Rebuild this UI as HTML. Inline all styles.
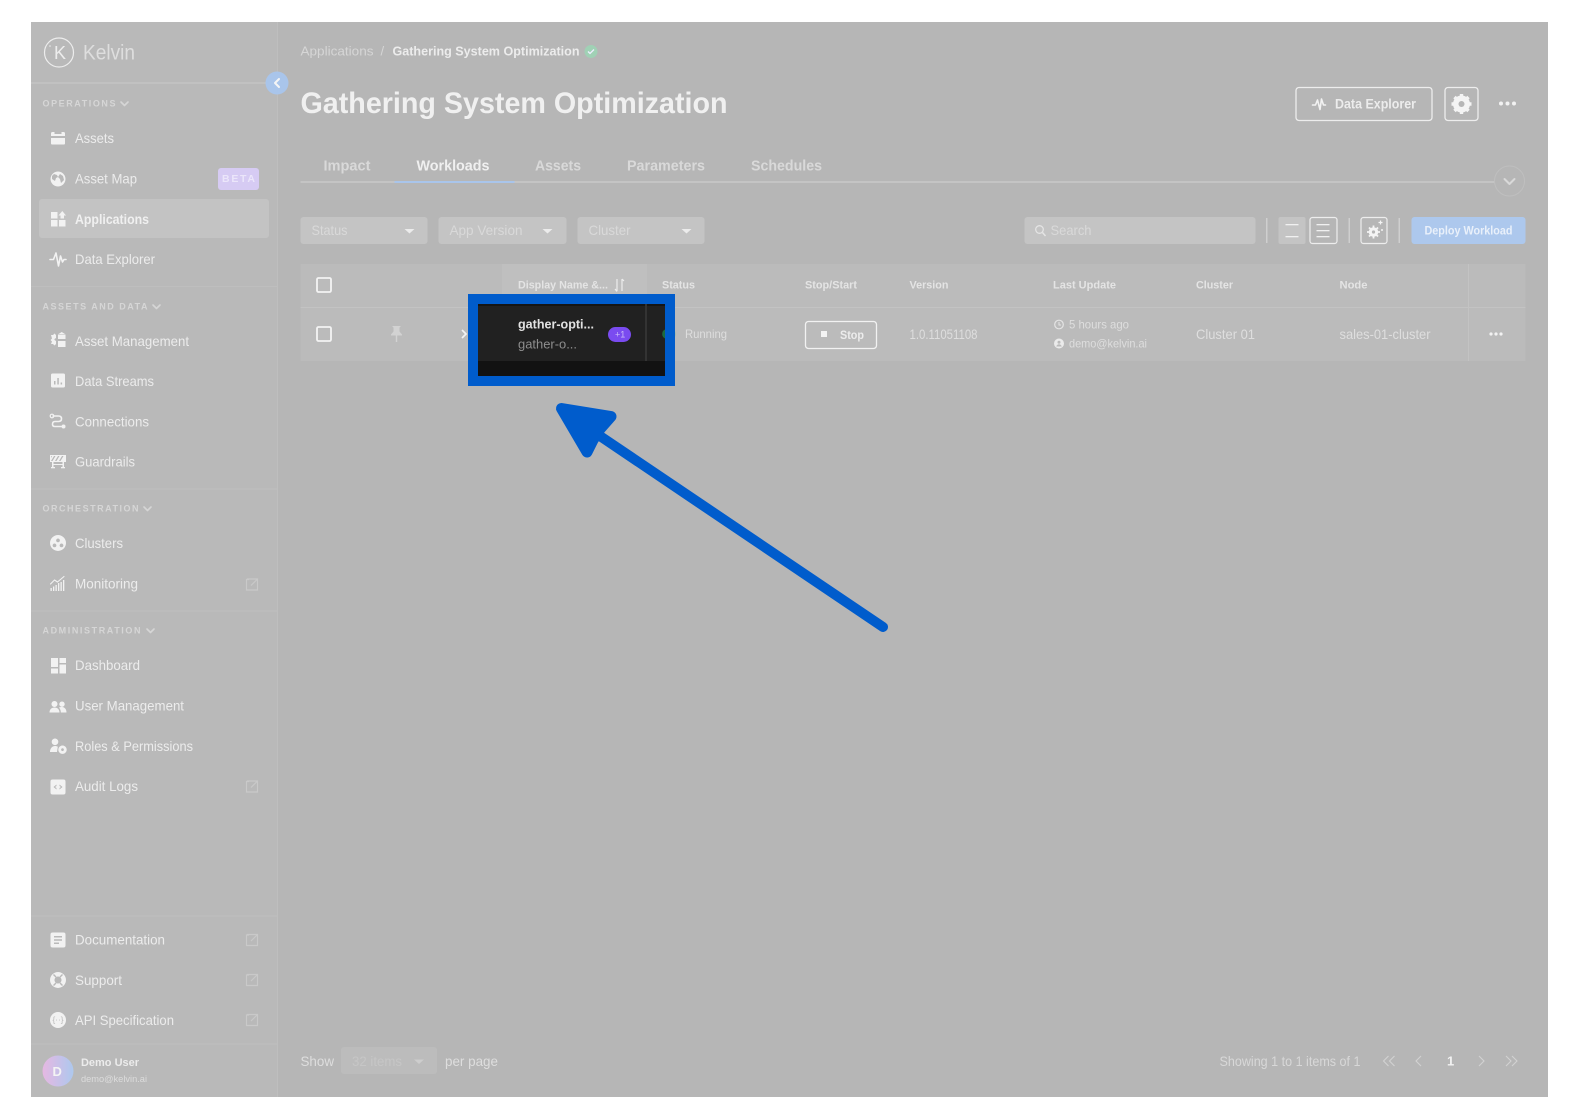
<!DOCTYPE html>
<html lang="en"><head><meta charset="utf-8"><title>Gathering System Optimization</title>
<style>
html,body{margin:0;padding:0;background:#fff;width:1580px;height:1120px;overflow:hidden}
svg{display:block}
text{font-family:"Liberation Sans",sans-serif;dominant-baseline:central;fill:#e6e6e6}
.n{font-size:14px;fill:#ececec}
.s{font-size:9px;font-weight:700;fill:#d6d6d6}
.h{font-size:11px;font-weight:700;fill:#e4e4e4}
.t{font-size:15px;font-weight:700;fill:#d9d9d9}
.f{font-size:14px;fill:#d9d9d9}
.c{font-size:14px;fill:#dedede}
.x{font-size:12px;fill:#dedede}
.ic{fill:#f2f2f2}
.ln{fill:none;stroke:#f2f2f2;stroke-width:1.6;stroke-linecap:round;stroke-linejoin:round}
.e{fill:none;stroke:#c9c9c9;stroke-width:1.2}
</style></head><body>
<svg width="1580" height="1120" viewBox="0 0 1580 1120" xmlns="http://www.w3.org/2000/svg">
<defs>
<filter id="b" x="0" y="0" width="100%" height="100%"><feGaussianBlur stdDeviation="0.35"/></filter>
<linearGradient id="av" x1="0" x2="1"><stop offset="0" stop-color="#e6b8e2"/><stop offset="1" stop-color="#adc8ee"/></linearGradient>
<g id="ext"><path class="e" d="M-3 -5H-5.500V5.500H5.500V2M-5 -5.500H5.500V5.500M-1 1L5 -5"/></g>
</defs>
<rect width="1580" height="1120" fill="#fff"/>
<g filter="url(#b)">
<rect x="31" y="22" width="1517" height="1075" fill="#b6b6b6"/>
<!-- sidebar -->
<rect x="31" y="22" width="246" height="1075" fill="#b9b9b9"/>
<rect x="277" y="22" width="1" height="1075" fill="#bebebe"/>
<rect x="31" y="82" width="246" height="2" fill="#c1c1c1"/>
<g fill="#bebebe"><rect x="31" y="286" width="246" height="1"/><rect x="31" y="488.500" width="246" height="1"/><rect x="31" y="610.500" width="246" height="1"/><rect x="31" y="915.500" width="246" height="1"/><rect x="31" y="1043.500" width="246" height="1"/></g>
<circle cx="59" cy="52.500" r="14.500" fill="none" stroke="#ededed" stroke-width="1.200"/>
<text x="54" y="53" font-size="18" style="fill:#ededed" textLength="12" lengthAdjust="spacingAndGlyphs">K</text>
<circle cx="50" cy="46" r="0.800" fill="#ededed"/>
<text x="83" y="53" font-size="21" style="fill:#dedede;font-weight:400" textLength="52" lengthAdjust="spacingAndGlyphs">Kelvin</text>
<circle cx="277" cy="83" r="11.500" fill="#a9c5eb"/>
<path d="M279 79L275 83L279 87" fill="none" stroke="#f5f5f5" stroke-width="2" stroke-linecap="round" stroke-linejoin="round"/>

<text class="s" x="42.500" y="103.300" textLength="73" lengthAdjust="spacing">OPERATIONS</text>
<path class="ln" style="stroke:#d6d6d6" d="M121 102L124.500 105.500L128 102"/>
<text class="s" x="42.500" y="306.300" textLength="105" lengthAdjust="spacing">ASSETS AND DATA</text>
<path class="ln" style="stroke:#d6d6d6" d="M153 305L156.500 308.500L160 305"/>
<text class="s" x="42.500" y="508.300" textLength="96" lengthAdjust="spacing">ORCHESTRATION</text>
<path class="ln" style="stroke:#d6d6d6" d="M144 507L147.500 510.500L151 507"/>
<text class="s" x="42.500" y="630.300" textLength="98" lengthAdjust="spacing">ADMINISTRATION</text>
<path class="ln" style="stroke:#d6d6d6" d="M147 629L150.500 632.500L154 629"/>

<rect x="39" y="199" width="230" height="39" rx="3" fill="#c3c3c3"/>
<rect x="218" y="168" width="41" height="22" rx="3" fill="#d6cbf3"/>
<text x="222" y="179" font-size="10.500" font-weight="700" style="fill:#ebe6fa" textLength="33" lengthAdjust="spacing">BETA</text>

<text class="n" x="75" y="138" textLength="39" lengthAdjust="spacingAndGlyphs">Assets</text>
<text class="n" x="75" y="178.500" textLength="62" lengthAdjust="spacingAndGlyphs">Asset Map</text>
<text class="n" x="75" y="219" style="font-weight:700;fill:#f0f0f0" textLength="74" lengthAdjust="spacingAndGlyphs">Applications</text>
<text class="n" x="75" y="259" textLength="80" lengthAdjust="spacingAndGlyphs">Data Explorer</text>
<text class="n" x="75" y="341" textLength="114" lengthAdjust="spacingAndGlyphs">Asset Management</text>
<text class="n" x="75" y="381" textLength="79" lengthAdjust="spacingAndGlyphs">Data Streams</text>
<text class="n" x="75" y="421.500" textLength="74" lengthAdjust="spacingAndGlyphs">Connections</text>
<text class="n" x="75" y="461.500" textLength="60" lengthAdjust="spacingAndGlyphs">Guardrails</text>
<text class="n" x="75" y="543" textLength="48" lengthAdjust="spacingAndGlyphs">Clusters</text>
<text class="n" x="75" y="583.500" textLength="63" lengthAdjust="spacingAndGlyphs">Monitoring</text>
<text class="n" x="75" y="665" textLength="65" lengthAdjust="spacingAndGlyphs">Dashboard</text>
<text class="n" x="75" y="705.500" textLength="109" lengthAdjust="spacingAndGlyphs">User Management</text>
<text class="n" x="75" y="746" textLength="118" lengthAdjust="spacingAndGlyphs">Roles &amp; Permissions</text>
<text class="n" x="75" y="786" textLength="63" lengthAdjust="spacingAndGlyphs">Audit Logs</text>
<text class="n" x="75" y="939.500" textLength="90" lengthAdjust="spacingAndGlyphs">Documentation</text>
<text class="n" x="75" y="980" textLength="47" lengthAdjust="spacingAndGlyphs">Support</text>
<text class="n" x="75" y="1020" textLength="99" lengthAdjust="spacingAndGlyphs">API Specification</text>

<!-- nav icons -->
<g class="ic">
<path d="M51 136V133.500Q51 132 52.500 132H54.500V134H61.500V132H63.500Q65 132 65 133.500V136ZM51 138H65V143.500Q65 144.500 64 144.500H52Q51 144.500 51 143.500Z" />
<path fill-rule="evenodd" d="M58 171.500a7.500 7.500 0 1 0 .01 0ZM54 174l3 1 1 2 -2 1 -1 3 -3 -2v-3ZM60 174l3 2 1 4 -3 3 -1 -4 -2 -2Z"/>
<path d="M51 212h6.500v6.500H51ZM51 220h6.500v6.500H51ZM59 220h6.500v6.500H59ZM62.300 211L66 215.500H64V218.500H60.500V215.500H58.500Z"/>
</g>
<path class="ln" d="M50 259.500H53.500L56 253L58.500 266L60.500 256L62.500 262L64 259.500H66"/>
<g class="ic">
<path d="M51 335h2l1.500 -1.500 1.500 1.500v3l-1.500 1v1l1.500 1v3l-1.500 1.500 -1.500 -1.500h-2l1 -2.500 -1.500 -1.500 1.500 -1.500ZM58 334.500h7.500v4.500H58ZM61.700 332L65 334H58.500ZM58 341h7.500v6H58Z"/>
<path fill-rule="evenodd" d="M52.500 373.500h11a1.500 1.500 0 0 1 1.500 1.500v11a1.500 1.500 0 0 1 -1.500 1.500h-11a1.500 1.500 0 0 1 -1.500 -1.500v-11a1.500 1.500 0 0 1 1.500 -1.500ZM54 381v3.500h1.500V381ZM57.300 378v6.500h1.500V378ZM60.600 382.500v2h1.500v-2Z"/>
</g>
<path class="ln" d="M53 416H58.500Q61.500 416 61.500 418.800Q61.500 421.500 58.500 421.500H55Q52.500 421.500 52.500 424.200Q52.500 426.500 55 426.500H61"/>
<circle cx="52" cy="416" r="1.800" fill="none" stroke="#f2f2f2" stroke-width="1.200"/><circle cx="63.500" cy="426.500" r="2" fill="#f2f2f2"/>
<g class="ic">
<path fill-rule="evenodd" d="M50 455h16v7H50ZM52 456l-1 2v-2ZM54 456l-3 5h1.500l3 -5ZM58 456l-3 5h1.500l3 -5ZM62 456l-3 5h1.500l3 -5Z"/>
<rect x="52" y="462" width="1.500" height="6"/><rect x="62.500" y="462" width="1.500" height="6"/><rect x="51" y="467" width="4" height="1.300"/><rect x="61" y="467" width="4" height="1.300"/><rect x="52" y="464" width="12" height="1"/>
<path fill-rule="evenodd" d="M58 535a8 8 0 1 0 .01 0ZM58 538.500a1.900 1.900 0 1 0 .01 0ZM54.500 543.500a1.900 1.900 0 1 0 .01 0ZM61.500 543.500a1.900 1.900 0 1 0 .01 0Z"/>
<path d="M50.500 588h1.300v3h-1.300ZM53 586.500h1.300v4.500H53ZM55.500 585h1.300v6h-1.300ZM58 583h1.300v8H58ZM60.500 582h1.300v9h-1.300ZM63 580h1.300v11H63Z"/>
</g>
<path class="ln" style="stroke-width:1.100" d="M50.500 584L54.500 580L57.500 582L64 576.500"/>
<g class="ic">
<path d="M51 658h7v9h-7ZM59.500 658h6.500v5h-6.500ZM59.500 664.500h6.500v9h-6.500ZM51 668.500h7v5h-7Z"/>
<path d="M54.500 701a3 3 0 1 1 -.01 0ZM62 701.500a2.700 2.700 0 1 1 -.01 0ZM49.500 712.500c0 -3 2 -5 5 -5s5 2 5 5ZM60.800 712.500c0 -2 -.5 -3.500 -1.800 -5 .8 -.4 2 -.5 3 -.5 2.500 0 4.500 2 4.500 5.500Z"/>
<path d="M55 738.500a3.300 3.300 0 1 1 -.01 0ZM50 752c0 -3.500 2 -6 5 -6 1.200 0 2 .3 2.800 .7l-.8 5.300Z"/>
<path fill-rule="evenodd" d="M62.500 745.500a4.200 4.200 0 1 0 .01 0ZM62.500 748.300a1.400 1.400 0 1 0 .01 0Z"/>
<path fill-rule="evenodd" d="M52.500 779.500h11a2 2 0 0 1 2 2v11a2 2 0 0 1 -2 2h-11a2 2 0 0 1 -2 -2v-11a2 2 0 0 1 2 -2ZM56.500 784.500L53.500 787L56.500 789.500V788L55 787L56.500 786ZM59.500 784.500V786L61 787L59.500 788V789.500L62.500 787Z"/>
<path fill-rule="evenodd" d="M52.500 932.500h11a2 2 0 0 1 2 2v11a2 2 0 0 1 -2 2h-11a2 2 0 0 1 -2 -2v-11a2 2 0 0 1 2 -2ZM54 936v1.500h8V936ZM54 939.300v1.500h8v-1.500ZM54 942.500v1.500h5v-1.500Z"/>
<path fill-rule="evenodd" d="M58 972a8 8 0 1 0 .01 0ZM58 976.500a3.500 3.500 0 1 0 .01 0ZM53 975l2.500 2.500 1 -1 -2.500 -2.500ZM63 975l-2.500 2.500 -1 -1 2.500 -2.500ZM53 985l2.500 -2.500 1 1 -2.500 2.500ZM63 985l-2.500 -2.500 -1 1 2.500 2.500Z"/>
<circle cx="58" cy="1020" r="8"/>
</g>
<text x="52.500" y="1020" font-size="8" style="fill:#b9b9b9" textLength="11" lengthAdjust="spacingAndGlyphs">{··}</text>
<use href="#ext" x="252" y="584.500"/><use href="#ext" x="252" y="786.500"/><use href="#ext" x="252" y="940"/><use href="#ext" x="252" y="980"/><use href="#ext" x="252" y="1020"/>

<circle cx="58" cy="1071" r="15.500" fill="url(#av)"/>
<text x="52.500" y="1071.500" font-size="13" font-weight="700" style="fill:#f4f4f4">D</text>
<text x="81" y="1063" font-size="11" font-weight="700" style="fill:#ececec" textLength="58" lengthAdjust="spacingAndGlyphs">Demo User</text>
<text x="81" y="1079.500" font-size="9.500" style="fill:#dcdcdc" textLength="66" lengthAdjust="spacingAndGlyphs">demo@kelvin.ai</text>

<!-- header -->
<text x="300.500" y="51" font-size="13" style="fill:#d6d6d6" textLength="73" lengthAdjust="spacingAndGlyphs">Applications</text>
<text x="380.500" y="51" font-size="13" style="fill:#d6d6d6">/</text>
<text x="392.500" y="51" font-size="13" font-weight="700" style="fill:#ececec" textLength="187" lengthAdjust="spacingAndGlyphs">Gathering System Optimization</text>
<circle cx="591" cy="51.500" r="6.500" fill="#a0d1b5"/>
<path d="M588 51.500L590 53.500L594 49.500" fill="none" stroke="#eef" stroke-width="1.300"/>
<text x="300.500" y="103.500" font-size="30" font-weight="700" style="fill:#f0f0f0" textLength="427" lengthAdjust="spacingAndGlyphs">Gathering System Optimization</text>

<g transform="translate(-2.500 0)">
<rect x="1298.500" y="87.500" width="136" height="33" rx="3" fill="none" stroke="#ededed" stroke-width="1.300"/>
<path class="ln" d="M1315 105H1318L1320 100L1322.500 109.500L1324 99L1326 105H1328"/>
<text x="1337.500" y="103.500" font-size="14" font-weight="700" style="fill:#ececec" textLength="81" lengthAdjust="spacingAndGlyphs">Data Explorer</text>
<rect x="1447.500" y="87.500" width="33" height="33" rx="3" fill="none" stroke="#ededed" stroke-width="1.300"/>
<circle cx="1464" cy="104" r="6.500" fill="none" stroke="#f4f4f4" stroke-width="4"/><path d="M1464 94V114M1454 104H1474M1457 97L1471 111M1471 97L1457 111" stroke="#f4f4f4" stroke-width="3.400"/>
<circle cx="1464" cy="104" r="3" fill="#b6b6b6"/>
<g fill="#f2f2f2"><circle cx="1503.500" cy="103.500" r="2"/><circle cx="1510" cy="103.500" r="2"/><circle cx="1516.500" cy="103.500" r="2"/></g>
</g>

<text class="t" x="323.500" y="166" textLength="47" lengthAdjust="spacingAndGlyphs">Impact</text>
<text class="t" x="416.500" y="166" style="fill:#f0f0f0" textLength="73" lengthAdjust="spacingAndGlyphs">Workloads</text>
<text class="t" x="535" y="166" textLength="46" lengthAdjust="spacingAndGlyphs">Assets</text>
<text class="t" x="627" y="166" textLength="78" lengthAdjust="spacingAndGlyphs">Parameters</text>
<text class="t" x="751" y="166" textLength="71" lengthAdjust="spacingAndGlyphs">Schedules</text>
<rect x="300.500" y="181.500" width="1195" height="1" fill="#d2d2d2"/>
<rect x="394.500" y="181" width="120" height="2" fill="#a9c5eb"/>
<circle cx="1509.500" cy="181" r="15" fill="#b6b6b6" stroke="#bfbfbf" stroke-width="1"/>
<path d="M1504.500 179L1509.500 184L1514.500 179" fill="none" stroke="#d9d9d9" stroke-width="2" stroke-linecap="round" stroke-linejoin="round"/>

<!-- filters -->
<g fill="#c4c4c4"><rect x="300.500" y="217" width="127" height="27" rx="3"/><rect x="438.500" y="217" width="128" height="27" rx="3"/><rect x="577.500" y="217" width="127" height="27" rx="3"/><rect x="1024.500" y="217" width="231" height="27" rx="3"/><rect x="1278.500" y="217" width="27" height="27" rx="2"/></g>
<text class="f" x="311.500" y="230" textLength="36" lengthAdjust="spacingAndGlyphs">Status</text>
<text class="f" x="449.500" y="230" textLength="73" lengthAdjust="spacingAndGlyphs">App Version</text>
<text class="f" x="588.500" y="230" textLength="42" lengthAdjust="spacingAndGlyphs">Cluster</text>
<g fill="#ececec"><path d="M404.500 229H414.500L409.500 233.500Z"/><path d="M542.500 229H552.500L547.500 233.500Z"/><path d="M681.500 229H691.500L686.500 233.500Z"/></g>
<g transform="translate(-2.500 0)">
<circle cx="1042" cy="229.500" r="3.800" fill="none" stroke="#e4e4e4" stroke-width="1.300"/><path d="M1045 232.500L1048 236" stroke="#e4e4e4" stroke-width="1.500"/>
<text class="f" x="1053" y="230" textLength="41" lengthAdjust="spacingAndGlyphs">Search</text>
<g fill="#cfcfcf"><rect x="1268.500" y="218" width="1.500" height="25"/><rect x="1351" y="218" width="1.500" height="25"/><rect x="1401" y="218" width="1.500" height="25"/></g>
<g fill="#f0f0f0"><rect x="1288" y="224" width="13" height="1.300"/><rect x="1288" y="236" width="13" height="1.300"/><rect x="1319" y="224" width="13" height="1.300"/><rect x="1319" y="230" width="13" height="1.300"/><rect x="1319" y="236" width="13" height="1.300"/></g>
<rect x="1312.500" y="217.500" width="27" height="26" rx="2.500" fill="none" stroke="#ededed" stroke-width="1.200"/>
<rect x="1363.500" y="217.500" width="26" height="26" rx="2.500" fill="none" stroke="#ededed" stroke-width="1.200"/>
<circle cx="1376" cy="232" r="3.500" fill="none" stroke="#f4f4f4" stroke-width="2.400"/>
<path d="M1376 225.500V238.500M1369.500 232H1382.500M1371.500 227.500L1380.500 236.500M1380.500 227.500L1371.500 236.500" stroke="#f4f4f4" stroke-width="1.800"/>
<circle cx="1376" cy="232" r="1.600" fill="#b6b6b6"/>
<path d="M1381 222.500H1385M1383 220.500V224.500" stroke="#f4f4f4" stroke-width="1.200"/><circle cx="1384.500" cy="230" r="1" fill="#f4f4f4"/>
<rect x="1414" y="217" width="114" height="27" rx="3" fill="#adc8ed"/>
<text x="1427" y="230.500" font-size="12" font-weight="700" style="fill:#e9f0fa" textLength="88" lengthAdjust="spacingAndGlyphs">Deploy Workload</text>
</g>

<!-- table -->
<rect x="300.500" y="264" width="1225" height="97" fill="#bbbbbb"/>
<rect x="502" y="264" width="145" height="97" fill="#bfbfbf"/>
<rect x="300.500" y="307" width="1225" height="1" fill="#c3c3c3"/>
<rect x="1470.500" y="264" width="1" height="97" fill="#c3c3c3" transform="translate(-2.500 0)"/>
<rect x="317" y="278" width="14" height="14" rx="1.500" fill="none" stroke="#f4f4f4" stroke-width="1.800"/>
<rect x="317" y="327" width="14" height="14" rx="1.500" fill="none" stroke="#f4f4f4" stroke-width="1.800"/>
<path d="M392 326H401L399.500 327.500V331.500L402 334.500V335.500H397.200V342H395.800V335.500H391V334.500L393.500 331.500V327.500Z" fill="#d2d2d2"/>
<path d="M462 330L466 334L462 338" fill="none" stroke="#f4f4f4" stroke-width="1.700"/>
<text class="h" x="518" y="285.500" textLength="90" lengthAdjust="spacingAndGlyphs">Display Name &amp;...</text>
<path d="M617 279V291M615 289L617 291.500M622 291V279M622 279L624 281" fill="none" stroke="#ededed" stroke-width="1.200"/>
<text class="h" x="662" y="285.500" textLength="33" lengthAdjust="spacingAndGlyphs">Status</text>
<text class="h" x="805" y="285.500" textLength="52" lengthAdjust="spacingAndGlyphs">Stop/Start</text>
<text class="h" x="909.500" y="285.500" textLength="39" lengthAdjust="spacingAndGlyphs">Version</text>
<text class="h" x="1053" y="285.500" textLength="63" lengthAdjust="spacingAndGlyphs">Last Update</text>
<text class="h" x="1196" y="285.500" textLength="37" lengthAdjust="spacingAndGlyphs">Cluster</text>
<text class="h" x="1339.500" y="285.500" textLength="28" lengthAdjust="spacingAndGlyphs">Node</text>
<text class="x" x="685" y="334" textLength="42" lengthAdjust="spacingAndGlyphs">Running</text>
<rect x="805.500" y="321.500" width="71" height="27" rx="3" fill="none" stroke="#f2f2f2" stroke-width="1.300"/>
<rect x="821" y="331" width="6" height="6" fill="#f4f4f4"/>
<text x="840" y="335" font-size="12" font-weight="700" style="fill:#ececec" textLength="24" lengthAdjust="spacingAndGlyphs">Stop</text>
<text class="c" x="909.500" y="334" textLength="68" lengthAdjust="spacingAndGlyphs">1.0.11051108</text>
<circle cx="1059" cy="324.500" r="4.300" fill="none" stroke="#e4e4e4" stroke-width="1.200"/><path d="M1059 322V325H1061" fill="none" stroke="#e4e4e4" stroke-width="1"/>
<text class="x" x="1069" y="324.500" textLength="60" lengthAdjust="spacingAndGlyphs">5 hours ago</text>
<circle cx="1059" cy="343.500" r="5" fill="#ebebeb"/><circle cx="1059" cy="342.200" r="1.500" fill="#bbb"/><path d="M1056.300 346.500c.5-1.600 1.500-2.200 2.700-2.200s2.200.6 2.700 2.200z" fill="#bbb"/>
<text class="x" x="1069" y="343.500" textLength="78" lengthAdjust="spacingAndGlyphs">demo@kelvin.ai</text>
<text class="c" x="1196" y="334" textLength="59" lengthAdjust="spacingAndGlyphs">Cluster 01</text>
<text class="c" x="1339.500" y="334" textLength="91" lengthAdjust="spacingAndGlyphs">sales-01-cluster</text>
<g fill="#f2f2f2"><circle cx="1491" cy="334" r="1.600"/><circle cx="1496" cy="334" r="1.600"/><circle cx="1501" cy="334" r="1.600"/></g>

<!-- footer -->
<text x="300.500" y="1061" font-size="14" style="fill:#dedede" textLength="33.500" lengthAdjust="spacingAndGlyphs">Show</text>
<rect x="341" y="1047" width="96" height="27" rx="3" fill="#bcbcbc"/>
<text x="352" y="1061" font-size="14" style="fill:#c6c6c6" textLength="50" lengthAdjust="spacingAndGlyphs">32 items</text>
<path d="M414 1059.500H424L419 1064Z" fill="#cdcdcd"/>
<text x="445" y="1061" font-size="14" style="fill:#dedede" textLength="53" lengthAdjust="spacingAndGlyphs">per page</text>
<text x="1219.500" y="1061" font-size="14" style="fill:#d8d8d8" textLength="141" lengthAdjust="spacingAndGlyphs">Showing 1 to 1 items of 1</text>
<path d="M1388.500 1056L1383.500 1061L1388.500 1066M1394.500 1056L1389.500 1061L1394.500 1066M1421 1056L1416 1061L1421 1066M1479 1056L1484 1061L1479 1066M1506 1056L1511 1061L1506 1066M1512 1056L1517 1061L1512 1066" fill="none" stroke="#d2d2d2" stroke-width="1.100"/>
<text x="1447" y="1061" font-size="13" font-weight="700" style="fill:#f2f2f2">1</text>
<circle cx="671" cy="334" r="5" fill="#a5bcad"/>
</g>

<!-- highlight overlay -->
<rect x="473" y="299" width="197" height="82" fill="#212121" stroke="#005ccc" stroke-width="10"/>
<rect x="478" y="304" width="187" height="2" fill="#151515"/>
<rect x="478" y="361" width="187" height="15" fill="#121212"/>
<rect x="645" y="304" width="2" height="57" fill="#333"/>
<path d="M665 329.500A5 5 0 0 0 665 338.500Z" fill="#1d6b3f"/>
<g filter="url(#b)">
<text x="518" y="324" font-size="13" font-weight="700" style="fill:#e2e2e2" textLength="76" lengthAdjust="spacingAndGlyphs">gather-opti...</text>
<text x="518" y="344" font-size="13" style="fill:#8d8d8d" textLength="59" lengthAdjust="spacingAndGlyphs">gather-o...</text>
<rect x="608" y="327" width="23" height="15" rx="7.500" fill="#7a4cf0"/>
<text x="615" y="334.500" font-size="9" style="fill:#c9b8f8">+1</text>
</g>
<path d="M883 627L597 434" stroke="#005ccc" stroke-width="10" stroke-linecap="round" fill="none"/>
<path d="M561.500 408.500L611 416.500L600 429L593 440L587 452Z" fill="#005ccc" stroke="#005ccc" stroke-width="11" stroke-linejoin="round"/>
</svg>
</body></html>
